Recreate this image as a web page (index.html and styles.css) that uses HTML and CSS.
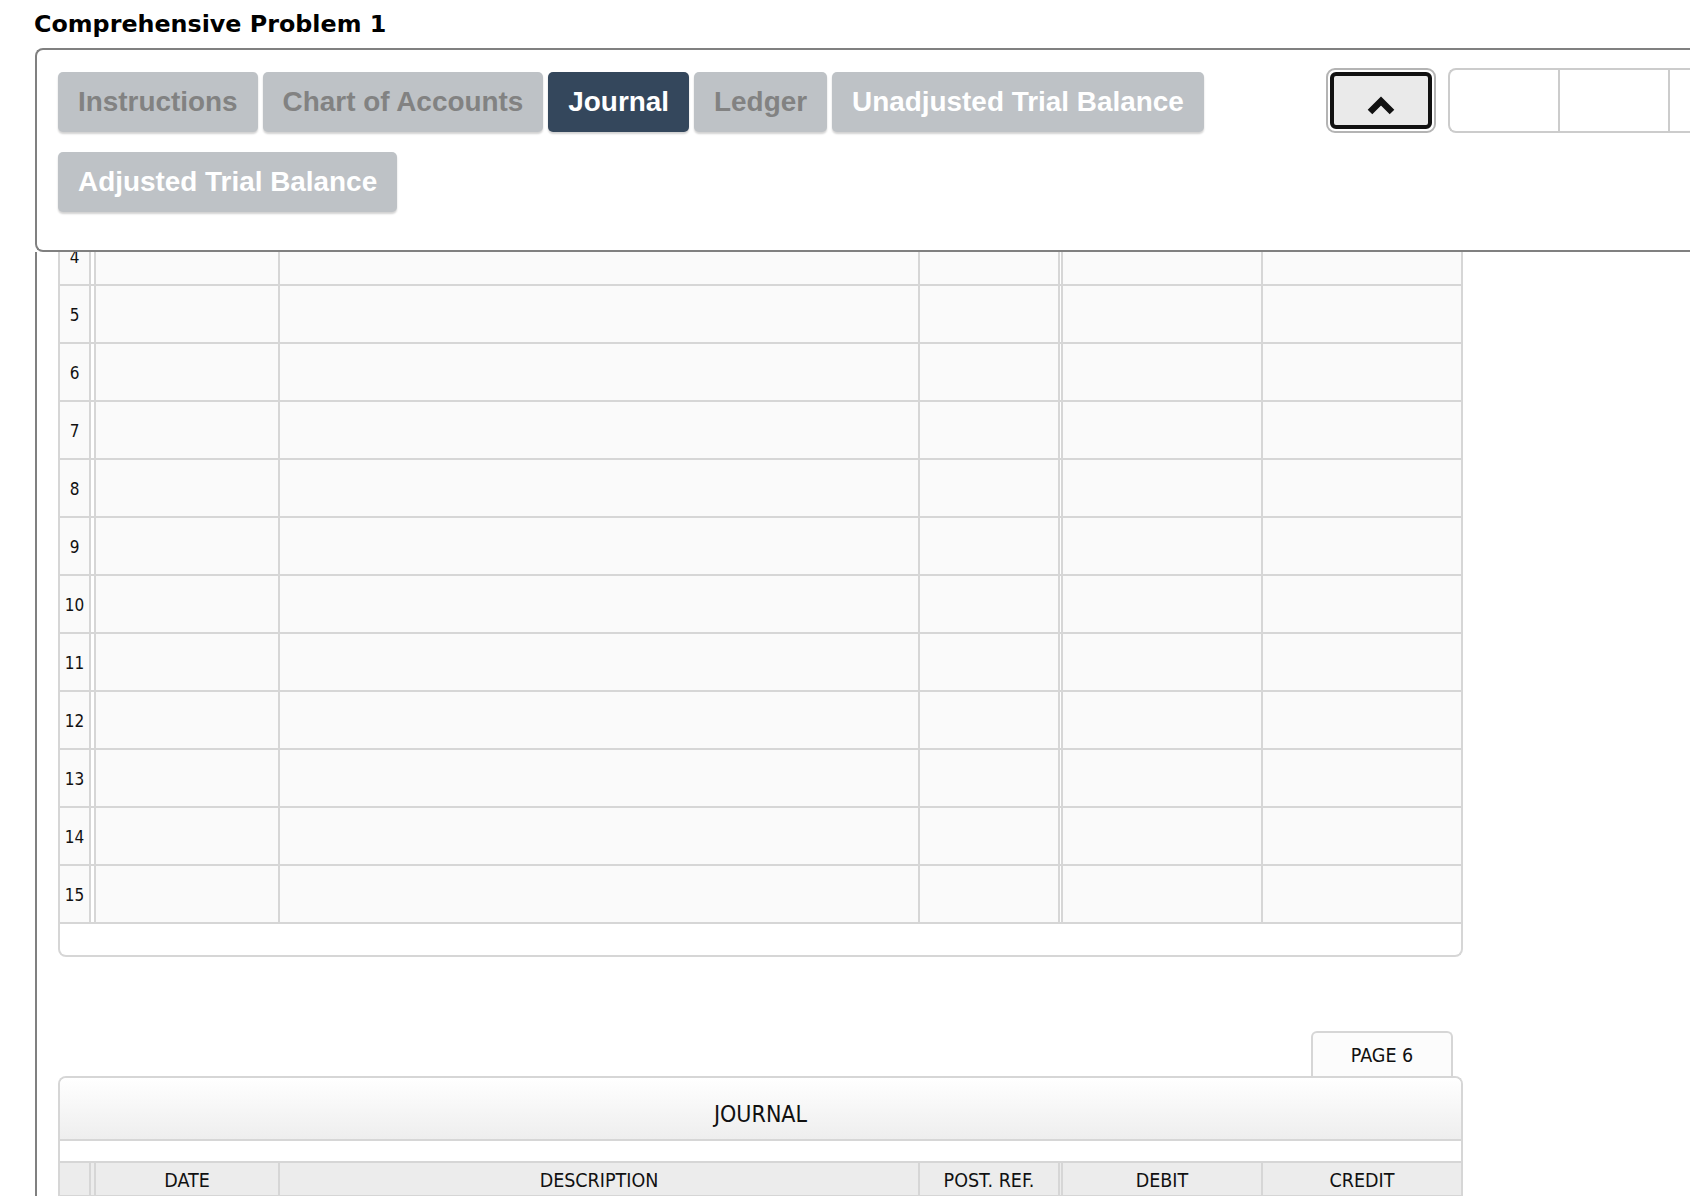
FILE: index.html
```html
<!DOCTYPE html>
<html lang="en">
<head>
<meta charset="utf-8">
<title>Comprehensive Problem 1</title>
<link rel="stylesheet" href="styles.css">
</head>
<body>
<div class="page">
  <h1 class="title">Comprehensive Problem 1</h1>
  <div class="frame">
    <div class="header">
      <div class="tabs">
        <div class="tab tab-locked">Instructions</div>
        <div class="tab tab-locked">Chart of Accounts</div>
        <div class="tab tab-active">Journal</div>
        <div class="tab tab-locked">Ledger</div>
        <div class="tab tab-open">Unadjusted Trial Balance</div>
        <div class="tab tab-open">Adjusted Trial Balance</div>
      </div>
      <div class="controls">
        <button class="up-btn" type="button" aria-label="Collapse">
          <span class="up-inner">
            <svg class="chevron" width="30" height="22" viewBox="0 0 30 22" aria-hidden="true">
              <polyline points="4,18 15,7 26,18" fill="none" stroke="#111" stroke-width="6.5" stroke-linejoin="miter"/>
            </svg>
          </span>
        </button>
        <div class="seg">
          <div class="seg-cell"></div>
          <div class="seg-cell"></div>
          <div class="seg-cell"></div>
        </div>
      </div>
    </div>
    <div class="content">
      <div class="scroller">
        <div class="jpanel jpanel-scrolled">
          <div class="jrow"><div class="c c-num">4</div><div class="c-gap"></div><div class="c c-date"></div><div class="c c-desc"></div><div class="c c-ref"></div><div class="c-gap2"></div><div class="c c-debit"></div><div class="c c-credit"></div></div>
          <div class="jrow"><div class="c c-num">5</div><div class="c-gap"></div><div class="c c-date"></div><div class="c c-desc"></div><div class="c c-ref"></div><div class="c-gap2"></div><div class="c c-debit"></div><div class="c c-credit"></div></div>
          <div class="jrow"><div class="c c-num">6</div><div class="c-gap"></div><div class="c c-date"></div><div class="c c-desc"></div><div class="c c-ref"></div><div class="c-gap2"></div><div class="c c-debit"></div><div class="c c-credit"></div></div>
          <div class="jrow"><div class="c c-num">7</div><div class="c-gap"></div><div class="c c-date"></div><div class="c c-desc"></div><div class="c c-ref"></div><div class="c-gap2"></div><div class="c c-debit"></div><div class="c c-credit"></div></div>
          <div class="jrow"><div class="c c-num">8</div><div class="c-gap"></div><div class="c c-date"></div><div class="c c-desc"></div><div class="c c-ref"></div><div class="c-gap2"></div><div class="c c-debit"></div><div class="c c-credit"></div></div>
          <div class="jrow"><div class="c c-num">9</div><div class="c-gap"></div><div class="c c-date"></div><div class="c c-desc"></div><div class="c c-ref"></div><div class="c-gap2"></div><div class="c c-debit"></div><div class="c c-credit"></div></div>
          <div class="jrow"><div class="c c-num">10</div><div class="c-gap"></div><div class="c c-date"></div><div class="c c-desc"></div><div class="c c-ref"></div><div class="c-gap2"></div><div class="c c-debit"></div><div class="c c-credit"></div></div>
          <div class="jrow"><div class="c c-num">11</div><div class="c-gap"></div><div class="c c-date"></div><div class="c c-desc"></div><div class="c c-ref"></div><div class="c-gap2"></div><div class="c c-debit"></div><div class="c c-credit"></div></div>
          <div class="jrow"><div class="c c-num">12</div><div class="c-gap"></div><div class="c c-date"></div><div class="c c-desc"></div><div class="c c-ref"></div><div class="c-gap2"></div><div class="c c-debit"></div><div class="c c-credit"></div></div>
          <div class="jrow"><div class="c c-num">13</div><div class="c-gap"></div><div class="c c-date"></div><div class="c c-desc"></div><div class="c c-ref"></div><div class="c-gap2"></div><div class="c c-debit"></div><div class="c c-credit"></div></div>
          <div class="jrow"><div class="c c-num">14</div><div class="c-gap"></div><div class="c c-date"></div><div class="c c-desc"></div><div class="c c-ref"></div><div class="c-gap2"></div><div class="c c-debit"></div><div class="c c-credit"></div></div>
          <div class="jrow"><div class="c c-num">15</div><div class="c-gap"></div><div class="c c-date"></div><div class="c c-desc"></div><div class="c c-ref"></div><div class="c-gap2"></div><div class="c c-debit"></div><div class="c c-credit"></div></div>
          <div class="jfooter"></div>
        </div>

        <div class="page-tab-row"><div class="page-tab">PAGE 6</div></div>

        <div class="jpanel jpanel-second">
          <div class="jtitle">JOURNAL</div>
          <div class="jstrip"></div>
          <div class="jrow jhead"><div class="c c-num"></div><div class="c-gap"></div><div class="c c-date">DATE</div><div class="c c-desc">DESCRIPTION</div><div class="c c-ref">POST. REF.</div><div class="c-gap2"></div><div class="c c-debit">DEBIT</div><div class="c c-credit">CREDIT</div></div>
        </div>
      </div>
    </div>
  </div>
</div>
</body>
</html>
```

FILE: styles.css
```css
html, body {
  margin: 0;
  padding: 0;
  height: 100%;
  overflow: hidden;
  background: #ffffff;
}

.page {
  padding-left: 35px;
}

.title {
  margin: 0 0 0 -1px;
  padding-top: 10px;
  height: 38px;
  line-height: 29px;
  font-family: "DejaVu Sans", Verdana, sans-serif;
  font-weight: bold;
  font-size: 23.8px;
  color: #000;
}

.frame {
  width: 1800px;
}

.header {
  display: flex;
  align-items: flex-start;
  border: 2px solid #808080;
  border-right: none;
  border-radius: 8px 0 0 8px;
  padding: 18px 0 38px 21px;
  background: #fff;
}

.tabs {
  flex: 0 0 1250px;
  display: flex;
  flex-wrap: wrap;
  gap: 20px 5px;
  padding-top: 4px;
}

.tab {
  height: 60px;
  line-height: 60px;
  padding: 0 20px;
  border-radius: 5px;
  font-family: "Liberation Sans", Arial, sans-serif;
  font-weight: bold;
  font-size: 27.9px;
  background: #bec2c6;
  color: #828282;
  box-shadow: 0 2px 2px rgba(0, 0, 0, 0.18);
  white-space: nowrap;
}

.tab-active {
  background: #34475c;
  color: #ffffff;
}

.tab-open {
  color: #ffffff;
}

.controls {
  margin-left: 18px;
  display: flex;
  gap: 12px;
}

.up-btn {
  box-sizing: border-box;
  width: 110px;
  height: 65px;
  padding: 2px;
  border: 2px solid #b4b4b4;
  border-radius: 9px;
  background: #ffffff;
  margin: 0;
}

.up-inner {
  box-sizing: border-box;
  display: flex;
  align-items: center;
  justify-content: center;
  height: 100%;
  border: 4px solid #111111;
  border-radius: 6px;
  background: #eaeaea;
}

.chevron {
  margin-top: 8px;
  filter: blur(0.5px);
}

.seg {
  display: flex;
  height: 65px;
  box-sizing: border-box;
  border: 2px solid #cccccc;
  border-right: none;
  border-radius: 8px 0 0 8px;
}

.seg-cell {
  box-sizing: border-box;
  width: 110px;
  border-right: 2px solid #cccccc;
}

.content {
  border-left: 2px solid #808080;
  height: 1000px;
  overflow: hidden;
}

.scroller {
  margin-top: -24px;
  padding-left: 21px;
}

.jpanel {
  box-sizing: border-box;
  width: 1405px;
  border: 2px solid #d6d6d6;
  background: #ffffff;
  font-family: "DejaVu Sans Condensed", "Open Sans", sans-serif;
  color: #111;
}

.jpanel-scrolled {
  border-top: none;
  border-radius: 0 0 8px 8px;
}

.jrow {
  display: flex;
  box-sizing: border-box;
  height: 58px;
  border-bottom: 2px solid #d6d6d6;
}

.c {
  box-sizing: border-box;
  background: #fafafa;
  display: flex;
  align-items: center;
  justify-content: center;
}

.c-num {
  width: 31px;
  border-right: 2px solid #d6d6d6;
  font-size: 17px;
  padding-top: 2px;
}

.c-gap {
  width: 3px;
  background: #ffffff;
}

.c-date {
  width: 186px;
  border-left: 2px solid #d6d6d6;
  border-right: 2px solid #d6d6d6;
}

.c-desc {
  width: 640px;
  border-right: 2px solid #d6d6d6;
}

.c-ref {
  width: 140px;
  border-right: 2px solid #d6d6d6;
}

.c-gap2 {
  width: 1px;
  background: #ffffff;
}

.c-debit {
  width: 202px;
  border-left: 2px solid #d6d6d6;
  border-right: 2px solid #d6d6d6;
}

.c-credit {
  width: 198px;
}

.jfooter {
  height: 31px;
}

.page-tab-row {
  width: 1405px;
  display: flex;
  justify-content: flex-end;
  padding-right: 10px;
  box-sizing: border-box;
  margin-top: 74px;
}

.page-tab {
  box-sizing: border-box;
  width: 142px;
  height: 45px;
  border: 2px solid #d6d6d6;
  border-bottom: none;
  border-radius: 6px 6px 0 0;
  background: #fcfcfc;
  font-family: "DejaVu Sans Condensed", "Open Sans", sans-serif;
  font-size: 19.5px;
  color: #111;
  display: flex;
  align-items: center;
  justify-content: center;
  padding-top: 2px;
}

.jpanel-second {
  border-bottom: none;
  border-radius: 8px 8px 0 0;
}

.jtitle {
  box-sizing: border-box;
  height: 63px;
  border-bottom: 2px solid #d6d6d6;
  border-radius: 6px 6px 0 0;
  background: linear-gradient(#ffffff, #eeeeee);
  display: flex;
  align-items: center;
  justify-content: center;
  padding-top: 10px;
  font-size: 23px;
}

.jstrip {
  height: 20px;
}

.jhead {
  height: 36px;
  border-top: 2px solid #d6d6d6;
}

.jhead .c {
  background: #ececec;
  font-size: 19.5px;
  padding-top: 2px;
}

.jhead .c-gap,
.jhead .c-gap2 {
  background: #ececec;
}
```
